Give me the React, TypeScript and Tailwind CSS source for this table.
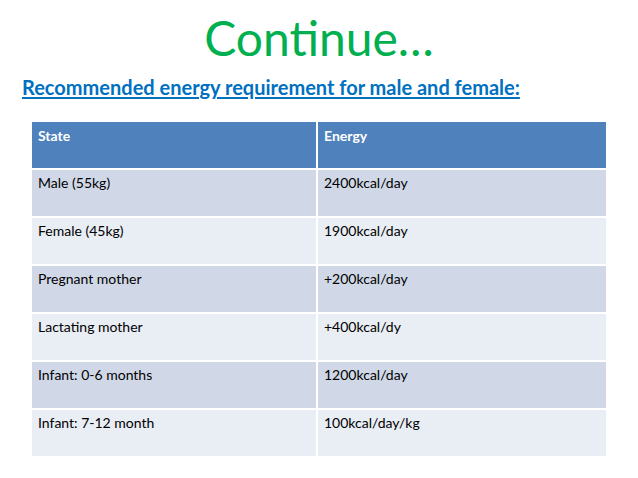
const rows = [
  ['Male (55kg)', '2400kcal/day'],
  ['Female (45kg)', '1900kcal/day'],
  ['Pregnant mother', '+200kcal/day'],
  ['Lactating mother', '+400kcal/dy'],
  ['Infant: 0-6 months', '1200kcal/day'],
  ['Infant: 7-12 month', '100kcal/day/kg'],
];

export default function App() {
  return (
    <div className="w-[638px] h-[478px] bg-white overflow-hidden" style={{ fontFamily: 'Lato, "Open Sans", sans-serif' }}>
      <div className="h-[75px] pt-[9px]">
        <h1 className="text-center text-[48px] leading-[58px] text-[#00B050]">Continue…</h1>
      </div>
      <p className="pl-[22px] text-[20px] leading-[24px] font-bold text-[#0070C0] underline underline-offset-2">
        Recommended energy requirement for male and female:
      </p>
      <div className="mx-[32px] mt-[23px] w-[574px]">
        <div className="flex h-[46px] bg-[#4F81BD] text-white font-bold text-[14px] leading-[20px]">
          <div className="w-[286px] border-r-2 border-white px-[6px] pt-[4px]">State</div>
          <div className="flex-1 px-[6px] pt-[4px]">Energy</div>
        </div>
        {rows.map((r, i) => (
          <div
            key={i}
            className={`flex h-[48px] border-t-2 border-white text-[14px] leading-[20px] text-black ${i % 2 === 0 ? 'bg-[#D0D8E8]' : 'bg-[#E9EDF4]'}`}
          >
            <div className="w-[286px] border-r-2 border-white px-[6px] pt-[3px]">{r[0]}</div>
            <div className="flex-1 px-[6px] pt-[3px]">{r[1]}</div>
          </div>
        ))}
      </div>
    </div>
  );
}
